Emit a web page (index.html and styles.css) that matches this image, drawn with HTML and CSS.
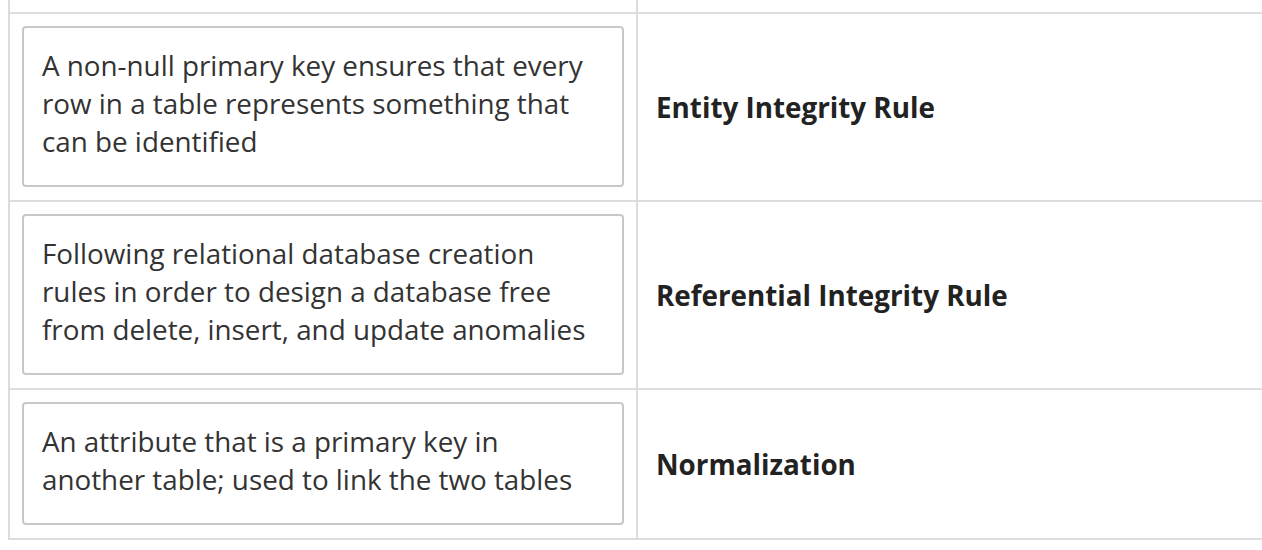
FILE: index.html
```html
<!DOCTYPE html>
<html lang="en">
<head>
<meta charset="utf-8">
<title>Matching</title>
<link rel="stylesheet" href="styles.css">
</head>
<body>
<div class="wrap">
<table class="match">
  <tr class="stub"><td class="col-prompt"></td><td class="col-answer"></td></tr>
  <tr>
    <td class="col-prompt"><div class="prompt">A non-null primary key ensures that every row in a table represents something that can be identified</div></td>
    <td class="col-answer">Entity Integrity Rule</td>
  </tr>
  <tr>
    <td class="col-prompt"><div class="prompt">Following relational database creation rules in order to design a database free from delete, insert, and update anomalies</div></td>
    <td class="col-answer">Referential Integrity Rule</td>
  </tr>
  <tr>
    <td class="col-prompt"><div class="prompt">An attribute that is a primary key in another table; used to link the two tables</div></td>
    <td class="col-answer">Normalization</td>
  </tr>
</table>
</div>
</body>
</html>
```
FILE: styles.css
```css
html, body {
  margin: 0;
  padding: 0;
  background: #fff;
  overflow: hidden;
}
body {
  font-family: "Open Sans", "Liberation Sans", sans-serif;
  font-size: 27.8px;
  line-height: 38px;
  color: #333;
}
.wrap {
  padding-left: 8px;
}
.match {
  border-collapse: separate;
  border-spacing: 0;
  width: 1320px;
  border-left: 2px solid #dcdcdc;
}
.match td {
  border-right: 2px solid #dcdcdc;
  border-bottom: 2px solid #dcdcdc;
  padding: 12px 12px 13px;
  vertical-align: middle;
}
.match .col-prompt {
  width: 602px;
}
.match .col-answer {
  padding-left: 18px;
  font-weight: 700;
  color: #222;
}
.match .stub td {
  height: 12px;
  padding: 0;
}
.prompt {
  border: 2px solid #c8c8c8;
  border-radius: 4px;
  padding: 18px 18px 25px;
}
```
